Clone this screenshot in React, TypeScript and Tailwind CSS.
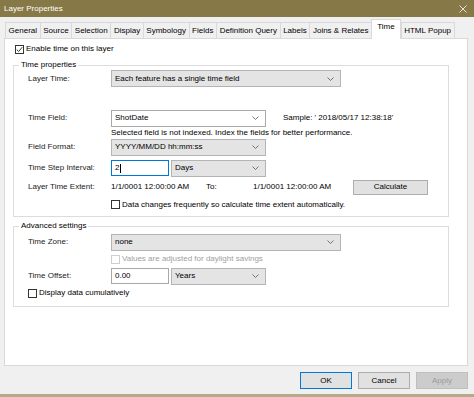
import React from "react";

const font = { fontFamily: '"Liberation Sans", Arial, sans-serif' };

const Chevron = () => (
  <svg width="7" height="4" viewBox="0 0 7 4" className="shrink-0">
    <path d="M0.5 0.5 L3.5 3.5 L6.5 0.5" fill="none" stroke="#555" strokeWidth="0.8" />
  </svg>
);

const Select = ({ text, w, white }: { text: string; w: string; white?: boolean }) => (
  <div
    className={`${w} h-[17px] flex items-center justify-between pl-[3px] pr-[6px] border ${
      white ? "bg-white border-[#a8a8a8]" : "bg-[#e4e4e4] border-[#b4b4b4]"
    }`}
  >
    <span>{text}</span>
    <Chevron />
  </div>
);

const Check = ({ checked, disabled }: { checked?: boolean; disabled?: boolean }) => (
  <div
    className={`w-[9px] h-[9px] border shrink-0 flex items-center justify-center ${
      disabled ? "border-[#cfcfcf] bg-white" : "border-[#333] bg-white"
    }`}
  >
    {checked && (
      <svg width="8" height="7" viewBox="0 0 8 7">
        <path d="M0.8 3.6 L3 5.8 L7.2 0.8" fill="none" stroke="#222" strokeWidth="1" />
      </svg>
    )}
  </div>
);

const Row = ({ label, children, h = "h-[17px]" }: { label: string; children: React.ReactNode; h?: string }) => (
  <div className={`flex items-center ${h}`}>
    <span className="w-[83px] shrink-0 text-[#222]">{label}</span>
    {children}
  </div>
);

const tabs = [
  "General",
  "Source",
  "Selection",
  "Display",
  "Symbology",
  "Fields",
  "Definition Query",
  "Labels",
  "Joins & Relates",
  "Time",
  "HTML Popup",
];

export default function App() {
  return (
    <div
      className="w-[474px] h-[397px] bg-[#f0f0f0] flex flex-col text-[8px] leading-[10px] text-black overflow-hidden"
      style={font}
    >
      <div className="h-[17px] bg-[#877947] flex items-center justify-between pl-[4px] pr-[7px] shrink-0">
        <span className="text-white text-[8px]">Layer Properties</span>
        <svg width="8" height="8" viewBox="0 0 8 8">
          <path d="M0.5 0.5 L7.5 7.5 M7.5 0.5 L0.5 7.5" stroke="#eee" strokeWidth="0.9" />
        </svg>
      </div>

      <div className="h-[21px] flex items-end pl-[5px] shrink-0">
        {tabs.map((t) =>
          t === "Time" ? (
            <div
              key={t}
              className="h-[20px] px-[5px] pb-[6px] bg-white border border-b-0 border-[#d9d9d9] flex items-center -mb-px relative z-10"
            >
              {t}
            </div>
          ) : (
            <div
              key={t}
              className="h-[16px] px-[2.6px] bg-[#f0f0f0] border border-r-0 last:border-r border-b-0 border-[#d9d9d9] flex items-center"
            >
              {t}
            </div>
          )
        )}
      </div>

      <div className="ml-[4px] w-[464px] h-[328px] bg-white border border-[#d9d9d9] shrink-0 pt-[5px] pl-[10px]">
        <div className="flex items-center gap-[2px] h-[10px]">
          <Check checked />
          <span>Enable time on this layer</span>
        </div>

        <fieldset className="-ml-[2px] mt-[6px] w-[436px] h-[157px] border border-[#dcdcdc] pl-[14px]">
          <legend className="ml-[-9px] px-[2px]">Time properties</legend>
          <div>
            <Row label="Layer Time:">
              <Select text="Each feature has a single time field" w="w-[230px]" />
            </Row>
            <div className="h-[23px]" />
            <Row label="Time Field:" h="h-[16px]">
              <Select text="ShotDate" w="w-[155px]" white />
              <span className="ml-[17px]">Sample: ' 2018/05/17 12:38:18'</span>
            </Row>
            <div className="pl-[83px] h-[13px] flex items-center">
              Selected field is not indexed. Index the fields for better performance.
            </div>
            <Row label="Field Format:" h="h-[16px]">
              <Select text="YYYY/MM/DD hh:mm:ss" w="w-[155px]" />
            </Row>
            <div className="h-[5px]" />
            <Row label="Time Step Interval:" h="h-[16px]">
              <div className="w-[58px] h-[16px] border border-[#0078d7] bg-white flex items-center pl-[3px]">
                2<span className="w-px h-[9px] bg-black ml-px" />
              </div>
              <div className="ml-[2px]">
                <Select text="Days" w="w-[95px]" />
              </div>
            </Row>
            <div className="h-[3px]" />
            <Row label="Layer Time Extent:" h="h-[16px]">
              <span className="w-[95px]">1/1/0001 12:00:00 AM</span>
              <span className="w-[47px]">To:</span>
              <span className="w-[100px]">1/1/0001 12:00:00 AM</span>
              <div className="w-[75px] h-[15px] bg-[#e1e1e1] border border-[#adadad] flex items-center justify-center">
                Calculate
              </div>
            </Row>
            <div className="h-[3px]" />
            <div className="pl-[83px] flex items-center gap-[2px] h-[13px]">
              <Check />
              <span>Data changes frequently so calculate time extent automatically.</span>
            </div>
          </div>
        </fieldset>

        <fieldset className="-ml-[2px] mt-[4px] w-[436px] h-[86px] border border-[#dcdcdc] pl-[14px]">
          <legend className="ml-[-9px] px-[2px]">Advanced settings</legend>
          <div className="mt-[3px]">
            <Row label="Time Zone:" h="h-[16px]">
              <Select text="none" w="w-[230px]" />
            </Row>
            <div className="pl-[83px] flex items-center gap-[2px] h-[18px] text-[#a0a0a0]">
              <Check disabled />
              <span>Values are adjusted for daylight savings</span>
            </div>
            <Row label="Time Offset:" h="h-[16px]">
              <div className="w-[58px] h-[16px] border border-[#a8a8a8] bg-white flex items-center pl-[3px]">
                0.00
              </div>
              <div className="ml-[2px]">
                <Select text="Years" w="w-[95px]" />
              </div>
            </Row>
            <div className="flex items-center gap-[2px] h-[14px] mt-[2px]">
              <Check />
              <span>Display data cumulatively</span>
            </div>
          </div>
        </fieldset>
      </div>

      <div className="flex justify-end gap-[6px] pr-[6px] pt-[6px] shrink-0">
        <div className="w-[52px] h-[17px] bg-[#e1e1e1] border border-[#0078d7] flex items-center justify-center">
          OK
        </div>
        <div className="w-[52px] h-[17px] bg-[#e1e1e1] border border-[#adadad] flex items-center justify-center">
          Cancel
        </div>
        <div className="w-[52px] h-[17px] bg-[#cccccc] border border-[#bfbfbf] text-[#9a9a9a] flex items-center justify-center">
          Apply
        </div>
      </div>
      <div className="flex-1" />
      <div className="h-[3px] bg-[#b3aa8a] shrink-0" />
    </div>
  );
}
